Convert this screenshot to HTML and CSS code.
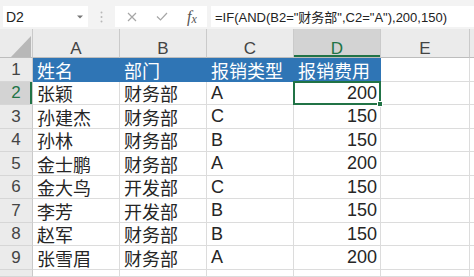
FILE: index.html
```html
<!DOCTYPE html>
<html lang="zh">
<head>
<meta charset="utf-8">
<title>Excel</title>
<link rel="stylesheet" href="styles.css">
</head>
<body>
<div class="fbar">
  <div class="namebox"><span>D2</span><svg class="arrow" width="6" height="4" viewBox="0 0 6 4"><path d="M0 0.5h6L3 3.5z" fill="#777"/></svg></div>
  <div class="dots"><svg width="3" height="12" viewBox="0 0 3 12"><circle cx="1.5" cy="1.5" r="1" fill="#b8b8b8"/><circle cx="1.5" cy="6" r="1" fill="#b8b8b8"/><circle cx="1.5" cy="10.5" r="1" fill="#b8b8b8"/></svg></div>
  <div class="fxbox">
    <span class="btn"><svg width="10" height="10" viewBox="0 0 10 10"><path d="M1 1L9 9M9 1L1 9" stroke="#a6a6a6" stroke-width="1.2" fill="none"/></svg></span>
    <span class="btn"><svg width="12" height="9" viewBox="0 0 12 9"><path d="M1 4.5L4.5 8L11 1" stroke="#a6a6a6" stroke-width="1.2" fill="none"/></svg></span>
    <span class="btn fx"><i>f<span class="x">x</span></i></span>
  </div>
  <div class="formula">=IF(AND(B2="财务部",C2="A"),200,150)</div>
</div>
<div class="sheet">
  <div class="c hd corner"><svg width="20" height="21" viewBox="0 0 20 21"><path d="M20 0V21H0z" fill="#b8b8b8"/></svg></div>
  <div class="c hd">A</div>
  <div class="c hd">B</div>
  <div class="c hd">C</div>
  <div class="c hd hsel">D</div>
  <div class="c hd">E</div>
  <div class="c hd"></div>

  <div class="c rh">1</div>
  <div class="c blue">姓名</div>
  <div class="c blue">部门</div>
  <div class="c blue">报销类型</div>
  <div class="c blue">报销费用</div>
  <div class="c"></div>
  <div class="c"></div>

  <div class="c rh rsel">2</div>
  <div class="c">张颖</div>
  <div class="c">财务部</div>
  <div class="c">A</div>
  <div class="c num sel">200</div>
  <div class="c"></div>
  <div class="c"></div>

  <div class="c rh">3</div>
  <div class="c">孙建杰</div>
  <div class="c">财务部</div>
  <div class="c">C</div>
  <div class="c num">150</div>
  <div class="c"></div>
  <div class="c"></div>

  <div class="c rh">4</div>
  <div class="c">孙林</div>
  <div class="c">财务部</div>
  <div class="c">B</div>
  <div class="c num">150</div>
  <div class="c"></div>
  <div class="c"></div>

  <div class="c rh">5</div>
  <div class="c">金士鹏</div>
  <div class="c">财务部</div>
  <div class="c">A</div>
  <div class="c num">200</div>
  <div class="c"></div>
  <div class="c"></div>

  <div class="c rh">6</div>
  <div class="c">金大鸟</div>
  <div class="c">开发部</div>
  <div class="c">C</div>
  <div class="c num">150</div>
  <div class="c"></div>
  <div class="c"></div>

  <div class="c rh">7</div>
  <div class="c">李芳</div>
  <div class="c">开发部</div>
  <div class="c">B</div>
  <div class="c num">150</div>
  <div class="c"></div>
  <div class="c"></div>

  <div class="c rh">8</div>
  <div class="c">赵军</div>
  <div class="c">财务部</div>
  <div class="c">B</div>
  <div class="c num">150</div>
  <div class="c"></div>
  <div class="c"></div>

  <div class="c rh">9</div>
  <div class="c">张雪眉</div>
  <div class="c">财务部</div>
  <div class="c">A</div>
  <div class="c num">200</div>
  <div class="c"></div>
  <div class="c"></div>

  <div class="c rh"></div>
  <div class="c"></div>
  <div class="c"></div>
  <div class="c"></div>
  <div class="c"></div>
  <div class="c"></div>
  <div class="c"></div>
</div>
</body>
</html>
```
FILE: styles.css
```css
html, body {
  margin: 0;
  padding: 0;
  background: #fff;
}
body {
  width: 474px;
  height: 277px;
  overflow: hidden;
  font-family: "Liberation Sans", "Noto Sans CJK SC", sans-serif;
}

/* formula bar */
.fbar {
  display: flex;
  height: 29px;
  box-sizing: border-box;
  padding: 6px 0 2px 3px;
  background: #f3f3f3;
}
.namebox {
  width: 85px;
  box-sizing: border-box;
  background: #fff;
  display: flex;
  align-items: center;
  justify-content: space-between;
  padding: 0 5px 0 3px;
  font-size: 14px;
  color: #222;
}
.dots {
  width: 27px;
  display: flex;
  align-items: center;
  justify-content: center;
}
.fxbox {
  width: 92px;
  box-sizing: border-box;
  background: #fff;
  display: flex;
  align-items: center;
  padding-left: 2px;
}
.btn {
  width: 30px;
  display: flex;
  align-items: center;
  justify-content: center;
}
.fx i {
  font-family: "Liberation Serif", serif;
  font-size: 16px;
  color: #555;
  line-height: 1;
}
.fx .x {
  font-size: 12px;
  position: relative;
  top: 1px;
}
.formula {
  flex: 1;
  margin-left: 4px;
  background: #fff;
  display: flex;
  align-items: center;
  padding-left: 4px;
  font-size: 13px;
  color: #222;
  white-space: nowrap;
  overflow: hidden;
}

/* sheet grid */
.sheet {
  display: grid;
  grid-template-columns: 33px 87px 87px 87px 87px 89px 1fr;
  grid-template-rows: 29px 24px 23px 24px 23px 24px 23px 24px 23px 24px 7px;
}
.c {
  box-sizing: border-box;
  border-right: 1px solid #dcdcdc;
  border-bottom: 1px solid #dcdcdc;
  display: flex;
  align-items: center;
  padding: 0 4px;
  font-size: 18px;
  color: #262626;
  white-space: nowrap;
}
.num {
  justify-content: flex-end;
  padding-right: 3px;
}
.hd {
  background: #ebebeb;
  border-right-color: #cacaca;
  border-bottom-color: #bdbdbd;
  justify-content: center;
  align-items: flex-end;
  font-size: 17px;
  line-height: 16px;
  color: #444;
  padding: 0;
}
.corner {
  justify-content: flex-end;
  padding-right: 1px;
}
.corner svg {
  display: block;
}
.rh {
  background: #ebebeb;
  border-right-color: #cacaca;
  border-bottom-color: #d6d6d6;
  justify-content: center;
  font-size: 17px;
  color: #444;
  padding: 0;
}
.hsel {
  background: #d3d3d3;
  color: #217346;
  box-shadow: inset 0 -2px 0 #217346;
}
.rsel {
  background: #d3d3d3;
  color: #217346;
  box-shadow: inset -2px 0 0 #217346;
}
.blue {
  background: #2f75b5;
  color: #fff;
  border-right-color: #2f75b5;
  border-bottom-color: #2f75b5;
}
.sel {
  position: relative;
}
.sel::after {
  content: "";
  position: absolute;
  left: -1px;
  top: -1px;
  right: -1px;
  bottom: -1px;
  border: 2px solid #217346;
}
.sel::before {
  content: "";
  position: absolute;
  width: 4px;
  height: 4px;
  right: -3px;
  bottom: -3px;
  background: #217346;
  border: 1px solid #fff;
  z-index: 2;
}
```
